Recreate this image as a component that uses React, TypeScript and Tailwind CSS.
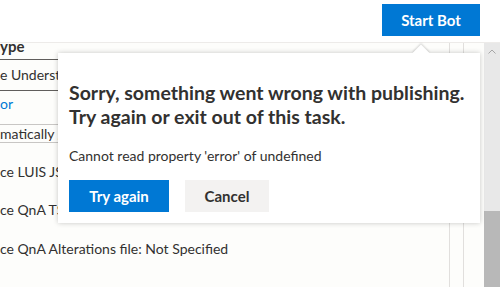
const FONT = "font-['Lato','Segoe_UI',sans-serif]"

export default function App() {
  return (
    <div className={`relative h-[287px] w-[500px] overflow-hidden bg-white text-[#323130] ${FONT}`}>
      <header className="flex h-[43px] items-start justify-end border-b border-[#edebe9] bg-white pr-5 pt-1">
        <button
          className="h-8 w-[98px] bg-[#0078d4] text-[15px] font-bold text-white"
          type="button"
        >
          Start Bot
        </button>
      </header>

      <div className="flex h-[244px]">
        <main className="relative flex-1 bg-[#fdfdfb]">
          <div className="text-sm">
            <p className="mt-[-7px] mb-[2px] h-[21px] text-[15px] font-bold">ype</p>
            <div className="flex h-8 w-[70px] items-center overflow-hidden border-y border-[#605e5c] whitespace-nowrap">
              e Understanding
            </div>
            <p className="flex h-[26px] items-center text-[#0078d4]">or</p>
            <div className="mt-[7px] flex h-[19px] w-[70px] items-center overflow-hidden border-y border-[#c8c6c4] whitespace-nowrap">
              matically generated
            </div>
            <p className="mt-[19px] w-[70px] overflow-hidden whitespace-nowrap">ce LUIS JSON file</p>
            <p className="mt-[18px] w-[70px] overflow-hidden whitespace-nowrap">ce QnA TSV file</p>
            <p className="mt-[19px] whitespace-nowrap">ce QnA Alterations file: Not Specified</p>
          </div>
          <div className="absolute top-0 bottom-0 left-[449px] w-px bg-[#e1dfdd]" />
          <div className="absolute top-0 bottom-0 left-[463px] w-px bg-[#e1dfdd]" />
        </main>

        <div className="flex w-4 flex-col bg-[#e8e8e8]">
          <div className="flex h-4 items-center justify-center">
            <svg width="8" height="5" viewBox="0 0 8 5" fill="none">
              <path d="M0.5 4.5 L4 1 L7.5 4.5" stroke="#a6a6a6" strokeWidth="1" />
            </svg>
          </div>
          <div className="mt-[152px] flex-1 bg-[#b8b8b8]" />
        </div>
      </div>

      <div className="absolute top-[53px] left-[58px] w-[422px] bg-white shadow-[0_0_5px_rgba(0,0,0,0.22)]">
        <div className="absolute -top-[6px] left-[357px] h-3 w-3 rotate-45 bg-white shadow-[-1px_-1px_2px_rgba(0,0,0,0.15)]" />
        <div className="relative bg-white px-[11px] pt-[28px] pb-[11px]">
          <h2 className="text-[19.5px] leading-6 font-bold whitespace-nowrap">
            Sorry, something went wrong with publishing.
            <br />
            Try again or exit out of this task.
          </h2>
          <p className="mt-[17px] text-sm leading-5">Cannot read property 'error' of undefined</p>
          <div className="mt-[14px] flex gap-4">
            <button className="h-8 w-[100px] bg-[#0078d4] text-[15px] font-bold text-white" type="button">
              Try again
            </button>
            <button className="h-8 w-[84px] bg-[#f3f2f1] text-[15px] font-bold text-[#323130]" type="button">
              Cancel
            </button>
          </div>
        </div>
      </div>
    </div>
  )
}
